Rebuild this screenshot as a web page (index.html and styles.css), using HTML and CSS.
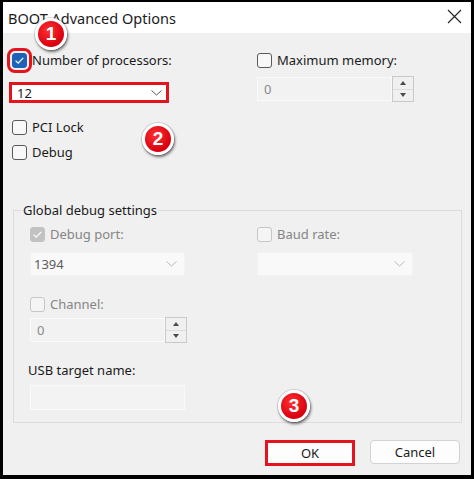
FILE: index.html
```html
<!DOCTYPE html>
<html lang="en">
<head>
<meta charset="utf-8">
<title>BOOT Advanced Options</title>
<link rel="stylesheet" href="styles.css">
</head>
<body>
<div class="window">
  <div class="titlebar">
    <span class="title">BOOT Advanced Options</span>
    <svg class="close" viewBox="0 0 15 15" aria-hidden="true"><path d="M1 1 L14 14 M14 1 L1 14"/></svg>
  </div>

  <div class="content">
    <div class="top">
      <div class="col">
        <div class="check-row">
          <span class="box checked marked"><svg viewBox="0 0 15 15"><path d="M3.6 7.6 L6.2 10.1 L11.2 4.9"/></svg></span>
          <span>Number of processors:</span>
        </div>
        <div class="combo combo-marked">
          <span>12</span>
          <svg class="chev" viewBox="0 0 11 6"><path d="M0.5 0.5 L5.5 5 L10.5 0.5"/></svg>
        </div>
        <div class="check-row row-pci"><span class="box"></span><span>PCI Lock</span></div>
        <div class="check-row row-debug"><span class="box"></span><span>Debug</span></div>
      </div>
      <div class="col">
        <div class="check-row"><span class="box"></span><span>Maximum memory:</span></div>
        <div class="spinner spinner-mem">
          <div class="spin-field">0</div>
          <div class="spin-btns">
            <span class="spin-half"><i class="arrow up"></i></span>
            <span class="spin-half"><i class="arrow down"></i></span>
          </div>
        </div>
      </div>
    </div>

    <fieldset class="group">
      <legend>Global debug settings</legend>
      <div class="group-cols">
        <div class="col">
          <div class="check-row disabled"><span class="box checked"><svg viewBox="0 0 15 15"><path d="M3.6 7.6 L6.2 10.1 L11.2 4.9"/></svg></span><span>Debug port:</span></div>
          <div class="combo combo-off">
            <span>1394</span>
            <svg class="chev" viewBox="0 0 11 6"><path d="M0.5 0.5 L5.5 5 L10.5 0.5"/></svg>
          </div>
          <div class="check-row disabled row-channel"><span class="box"></span><span>Channel:</span></div>
          <div class="spinner spinner-channel">
            <div class="spin-field">0</div>
            <div class="spin-btns">
              <span class="spin-half"><i class="arrow up"></i></span>
              <span class="spin-half"><i class="arrow down"></i></span>
            </div>
          </div>
          <div class="field-label">USB target name:</div>
          <div class="text-field"></div>
        </div>
        <div class="col">
          <div class="check-row disabled"><span class="box"></span><span>Baud rate:</span></div>
          <div class="combo combo-off combo-wide">
            <span></span>
            <svg class="chev" viewBox="0 0 11 6"><path d="M0.5 0.5 L5.5 5 L10.5 0.5"/></svg>
          </div>
        </div>
      </div>
    </fieldset>

    <div class="footer">
      <button class="btn btn-marked" type="button">OK</button>
      <button class="btn" type="button">Cancel</button>
    </div>
  </div>

  <span class="badge badge-1">1</span>
  <span class="badge badge-2">2</span>
  <span class="badge badge-3">3</span>
</div>
</body>
</html>
```

FILE: styles.css
```css
html, body {
  margin: 0;
  padding: 0;
  background: #000;
}

body {
  font-family: "Noto Sans", "Open Sans", sans-serif;
  font-size: 13px;
  color: #1b1b1b;
}

.window {
  position: relative;
  margin: 2px 3px 0;
  height: 473px;
  background: #f0f0f0;
  display: flex;
  flex-direction: column;
  overflow: hidden;
}

/* title bar */
.titlebar {
  height: 31px;
  flex: none;
  background: #fff;
  display: flex;
  align-items: center;
  justify-content: space-between;
  padding: 0 9px 0 5px;
}

.title {
  font-size: 14.5px;
  color: #1b1b1b;
}

.close {
  width: 15px;
  height: 15px;
  margin-top: -2px;
}

.close path {
  stroke: #222;
  stroke-width: 1.1;
  fill: none;
}

/* body */
.content {
  flex: 1;
  padding: 0 9px;
  display: flex;
  flex-direction: column;
}

.top {
  display: grid;
  grid-template-columns: 245px 1fr;
  padding-top: 20px;
}

.col {
  display: flex;
  flex-direction: column;
  align-items: flex-start;
}

/* checkboxes */
.check-row {
  display: flex;
  align-items: center;
  gap: 5px;
  height: 15px;
  line-height: 15px;
  white-space: nowrap;
}

.box {
  position: relative;
  flex: none;
  box-sizing: border-box;
  width: 15px;
  height: 15px;
  border: 1px solid #5a5a5a;
  border-radius: 3px;
  background: #f8f8f8;
}

.box svg {
  position: absolute;
  inset: -1px;
  width: 15px;
  height: 15px;
}

.box svg path {
  fill: none;
  stroke: #fff;
  stroke-width: 1.3;
}

.box.checked {
  background: #1d62b8;
  border-color: #1d62b8;
}

.box.marked {
  outline: 3px solid #e3141d;
  outline-offset: 2px;
}

.row-pci {
  margin-top: 17px;
}

.row-debug {
  margin-top: 10px;
}

.disabled {
  color: #858585;
}

.disabled .box {
  border-color: #c6c6c6;
  background: #f5f5f5;
}

.disabled .box.checked {
  background: #c2c2c2;
  border-color: #c2c2c2;
}

/* combo boxes */
.combo {
  box-sizing: border-box;
  display: flex;
  align-items: center;
  justify-content: space-between;
  background: #fff;
  color: #1b1b1b;
}

.chev {
  width: 11px;
  height: 6px;
}

.chev path {
  fill: none;
  stroke: #555;
  stroke-width: 1;
}

.combo-marked {
  width: 160px;
  height: 21px;
  margin: 14px 0 0 -3px;
  border: 3px solid #e3141d;
  padding: 0 4px 0 5px;
}

.combo-off {
  width: 155px;
  height: 24px;
  margin-top: 10px;
  padding: 0 7px 0 3px;
  background: #f9f9f9;
  border: 1px solid #f3f3f3;
  color: #5c5c5c;
}

.combo-off .chev path {
  stroke: #b8b8b8;
}

.combo-wide {
  width: 156px;
}

/* spin boxes */
.spinner {
  display: flex;
  align-items: center;
}

.spinner-mem {
  margin-top: 8px;
}

.spinner-mem .spin-field {
  width: 135px;
}

.spinner-channel {
  margin-top: 5px;
}

.spinner-channel .spin-field {
  width: 135px;
}

.spin-field {
  box-sizing: border-box;
  height: 24px;
  line-height: 22px;
  padding-left: 6px;
  background: #f2f2f2;
  border: 1px solid #fafafa;
  color: #8a8a8a;
}

.spin-btns {
  box-sizing: border-box;
  width: 22px;
  height: 26px;
  border: 1px solid #c9c9c9;
  background: #f0f0f0;
  display: flex;
  flex-direction: column;
}

.spin-half {
  flex: 1;
  display: flex;
  align-items: center;
  justify-content: center;
}

.spin-half + .spin-half {
  border-top: 1px solid #dcdcdc;
}

.arrow {
  width: 0;
  height: 0;
  border-left: 3.5px solid transparent;
  border-right: 3.5px solid transparent;
}

.arrow.up {
  border-bottom: 4px solid #4a4a4a;
}

.arrow.down {
  border-top: 4px solid #4a4a4a;
}

/* group box */
.group {
  margin: 41px 0 0 1px;
  width: 449px;
  box-sizing: border-box;
  padding: 0 0 12px 0;
  border: 1px solid #dcdcdc;
  border-radius: 0;
}

.group legend {
  margin-left: 8px;
  padding: 0 1px;
  line-height: 18px;
  color: #1b1b1b;
}

.group-cols {
  display: grid;
  grid-template-columns: 227px 1fr;
  padding: 8px 0 0 16px;
}

.row-channel {
  margin-top: 21px;
}

.field-label {
  margin: 18px 0 0 -2px;
  line-height: 18px;
}

.text-field {
  box-sizing: border-box;
  width: 155px;
  height: 25px;
  margin-top: 6px;
  background: #f3f3f3;
  border: 1px solid #fafafa;
}

/* dialog buttons */
.footer {
  display: flex;
  justify-content: flex-end;
  gap: 15px;
  margin-top: 17px;
  padding-right: 2px;
}

.btn {
  box-sizing: border-box;
  width: 90px;
  height: 24px;
  background: #fdfdfd;
  border: 1px solid #d2d2d2;
  border-radius: 4px;
  font: inherit;
  color: #1b1b1b;
  padding: 0;
}

.btn-marked {
  height: 26px;
  border: 3px solid #e3141d;
  border-radius: 0;
}

/* numbered callouts */
.badge {
  position: absolute;
  width: 26px;
  height: 26px;
  border-radius: 50%;
  background: radial-gradient(circle at 40% 35%, #ff3030, #d80010 70%);
  border: 3px solid #fff;
  box-shadow: 1px 2px 3px rgba(0, 0, 0, 0.55), 0 0 0 1px rgba(0, 0, 0, 0.12);
  color: #fff;
  font: bold 19px "Liberation Sans", Arial, sans-serif;
  display: flex;
  align-items: center;
  justify-content: center;
}

.badge-1 {
  left: 32px;
  top: 16px;
}

.badge-2 {
  left: 139px;
  top: 121px;
}

.badge-3 {
  left: 275px;
  top: 388px;
}
```
